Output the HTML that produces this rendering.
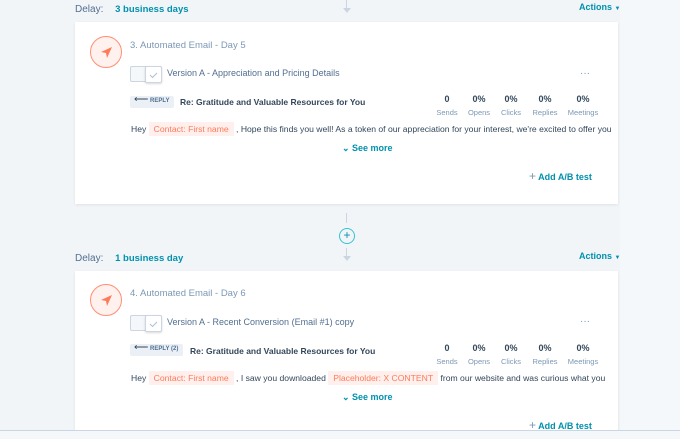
<!DOCTYPE html><html><head><style>
*{margin:0;padding:0;box-sizing:border-box}
body{width:680px;height:439px;overflow:hidden;background:#f2f5f8;font-family:"Liberation Sans",sans-serif;position:relative;color:#33475b}
.a{position:absolute;white-space:nowrap}
.card{position:absolute;left:75px;width:543px;background:#fff;box-shadow:0 1px 3px rgba(0,0,0,.08)}
.delay{font-size:10px;color:#516f90}
.teal{color:#0091ae;font-weight:bold}
.ic{width:32px;height:32px;border:1px solid #ff8f73;border-radius:50%;background:#fff1ee}
.tog{width:32px;height:16px;border:1px solid #cbd6e2;border-radius:2px;background:#f5f8fa}
.tog i{position:absolute;right:-1px;top:-1px;width:17px;height:17px;background:#fff;border:1px solid #cbd6e2;border-radius:2px;box-shadow:0 1px 2px rgba(0,0,0,.15)}
.badge{background:#eaf0f6;border-radius:2px;height:12px;font-size:6px;font-weight:bold;color:#516f90;padding:2px 5px 0 20px}
.st{text-align:center;width:40px}
.st b{display:block;font-size:9px;color:#33475b}
.st span{display:block;font-size:7.5px;color:#7c98b6;margin-top:4px}
.tok{background:#fff0ed;color:#ff7a59;padding:2px 5px}
.sm{font-size:9px;font-weight:bold;color:#0091ae}
.subj{font-size:8.5px;font-weight:bold}
.body{font-size:8.6px}
</style></head><body>
<div class="a" style="left:620px;top:0;width:60px;height:439px;background:#f5f8fa"></div>
<div class="a delay" style="left:75px;top:4px">Delay: <span class="teal" style="margin-left:9px;font-size:9.5px">3 business days</span></div>
<div class="a sm" style="left:579px;top:2px;font-size:9px">Actions <span style="font-size:6px">▼</span></div>
<div class="a" style="left:346px;top:0;width:1px;height:10px;background:#cbd6e2"></div>
<div class="a" style="left:343px;top:8px;width:0;height:0;border:4px solid transparent;border-top:5px solid #cbd6e2"></div>

<div class="a" style="left:346px;top:213px;width:1px;height:10px;background:#cbd6e2"></div>
<div class="a" style="left:339px;top:228px;width:16px;height:16px;border:1.5px solid #32c5d2;border-radius:50%;color:#0091ae;font-size:12px;line-height:12px;text-align:center">+</div>
<div class="a" style="left:346px;top:248px;width:1px;height:8px;background:#cbd6e2"></div>
<div class="a" style="left:343px;top:256px;border:4px solid transparent;border-top:5px solid #cbd6e2"></div>
<div class="a delay" style="left:75px;top:253px">Delay: <span class="teal" style="margin-left:9px;font-size:9.5px">1 business day</span></div>
<div class="a sm" style="left:579px;top:251px">Actions <span style="font-size:6px">▼</span></div>

<div class="card" style="top:22px;height:182px"></div>
<div class="card" style="top:271px;height:168px"></div>
<div class="a" style="left:0;top:430px;width:680px;height:9px;background:#f5f8fa;border-top:1px solid #cbd6e2"></div>

<!-- card1 -->
<div class="a ic" style="left:90px;top:36px"><svg width="30" height="30" viewBox="0 0 30 30"><path d="M10 15 L21 10 L16 21 L15 16 Z" fill="#ff7a59"/></svg></div>
<div class="a" style="left:130px;top:40px;font-size:9.5px;color:#7c98b6">3. Automated Email - Day 5</div>
<div class="a tog" style="left:130px;top:66px"><i><svg width="15" height="15"><path d="M4 8l2.5 2.5L11 6" stroke="#b0c1d4" fill="none"/></svg></i></div>
<div class="a" style="left:167px;top:68px;font-size:9px;color:#516f90">Version A - Appreciation and Pricing Details</div>
<div class="a" style="left:580px;top:68px;font-size:10px;color:#7c98b6">···</div>
<div class="a badge" style="left:130px;top:96px">REPLY</div>
<div class="a" style="left:134px;top:94px;font-size:10px;color:#33475b">⟵</div>
<div class="a subj" style="left:180px;top:97px">Re: Gratitude and Valuable Resources for You</div>
<div class="a st" style="left:427px;top:94px"><b>0</b><span>Sends</span></div>
<div class="a st" style="left:459px;top:94px"><b>0%</b><span>Opens</span></div>
<div class="a st" style="left:491px;top:94px"><b>0%</b><span>Clicks</span></div>
<div class="a st" style="left:525px;top:94px"><b>0%</b><span>Replies</span></div>
<div class="a st" style="left:563px;top:94px"><b>0%</b><span>Meetings</span></div>
<div class="a body" style="left:131px;top:124px">Hey <span class="tok">Contact: First name</span> , Hope this finds you well! As a token of our appreciation for your interest, we're excited to offer you</div>
<div class="a sm" style="left:342px;top:143px">⌄ See more</div>
<div class="a sm" style="left:529px;top:169px"><span style="font-weight:normal;font-size:12px;color:#7c98b6">+</span> Add A/B test</div>

<!-- card2 -->
<div class="a ic" style="left:90px;top:284px"><svg width="30" height="30" viewBox="0 0 30 30"><path d="M10 15 L21 10 L16 21 L15 16 Z" fill="#ff7a59"/></svg></div>
<div class="a" style="left:130px;top:288px;font-size:9.5px;color:#7c98b6">4. Automated Email - Day 6</div>
<div class="a tog" style="left:130px;top:315px"><i><svg width="15" height="15"><path d="M4 8l2.5 2.5L11 6" stroke="#b0c1d4" fill="none"/></svg></i></div>
<div class="a" style="left:167px;top:317px;font-size:9px;color:#516f90">Version A - Recent Conversion (Email #1) copy</div>
<div class="a" style="left:580px;top:316px;font-size:10px;color:#7c98b6">···</div>
<div class="a badge" style="left:130px;top:344px">REPLY (2)</div>
<div class="a" style="left:134px;top:342px;font-size:10px">⟵</div>
<div class="a subj" style="left:190px;top:346px">Re: Gratitude and Valuable Resources for You</div>
<div class="a st" style="left:427px;top:343px"><b>0</b><span>Sends</span></div>
<div class="a st" style="left:459px;top:343px"><b>0%</b><span>Opens</span></div>
<div class="a st" style="left:491px;top:343px"><b>0%</b><span>Clicks</span></div>
<div class="a st" style="left:525px;top:343px"><b>0%</b><span>Replies</span></div>
<div class="a st" style="left:563px;top:343px"><b>0%</b><span>Meetings</span></div>
<div class="a body" style="left:131px;top:373px">Hey <span class="tok">Contact: First name</span> , I saw you downloaded <span class="tok">Placeholder: X CONTENT</span> from our website and was curious what you</div>
<div class="a sm" style="left:342px;top:392px">⌄ See more</div>
<div class="a sm" style="left:529px;top:418px"><span style="font-weight:normal;font-size:12px;color:#7c98b6">+</span> Add A/B test</div>
</body></html>
